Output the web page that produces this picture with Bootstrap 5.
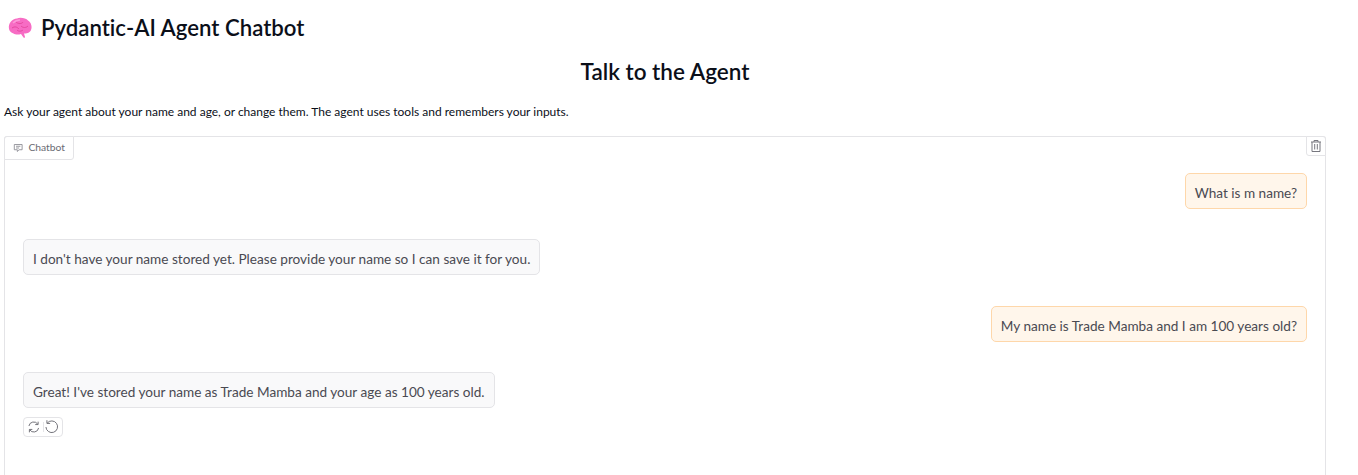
<!DOCTYPE html>
<html lang="en">
<head>
  <meta charset="UTF-8" />
  <meta name="viewport" content="width=device-width, initial-scale=1.0"/>
  <title>Pydantic-AI Agent Chatbot</title>
  <link href="https://cdn.jsdelivr.net/npm/bootstrap@5.3.0/dist/css/bootstrap.min.css" rel="stylesheet">
  <style>
    html, body {
      height: 475px;
      overflow: hidden;
    }
    body {
      background-color: #fff;
      font-family: "Lato", "Noto Sans", sans-serif;
      font-variant-ligatures: none;
      color: #0b0f19;
    }
    .page-wrap {
      width: 1326px;
      padding: 13px 0 0 4px;
    }
    .app-title {
      font-size: 22.2px;
      line-height: 30px;
      font-weight: 600;
      margin: 0 0 0 4px;
      gap: 8px;
    }
    .agent-heading {
      font-size: 22.5px;
      line-height: 30px;
      font-weight: 600;
      margin: 14px 0 0 0;
      text-align: center;
    }
    .agent-note {
      font-size: 12px;
      line-height: 18px;
      margin: 16px 0 15px 0;
    }
    .chat-panel {
      border: 1px solid #e4e4e7;
      border-bottom: 0;
      border-radius: 3px 3px 0 0;
      height: 340px;
      padding: 36px 18px 0 18px;
    }
    .chat-tag {
      top: -1px;
      left: -1px;
      width: 70px;
      height: 24px;
      padding: 0 8px;
      gap: 5px;
      font-size: 10.3px;
      color: #6b6b73;
      border: 1px solid #e4e4e7;
      border-radius: 3px 0 3px 0;
      background: #fff;
    }
    .trash-btn {
      top: -1px;
      right: -1px;
      width: 20px;
      height: 20px;
      border: 1px solid #e4e4e7;
      border-radius: 0 3px 0 3px;
      background: #fff;
    }
    .msg-row {
      margin-bottom: 30.3px;
    }
    .msg-bubble {
      font-size: 13.6px;
      line-height: 18px;
      padding: 10px 9px 6px 9px;
      height: 36px;
      color: #4a4a52;
      border-radius: 5px;
      white-space: nowrap;
    }
    .msg-user {
      background: #fff6eb;
      border: 1px solid #fed7aa;
    }
    .msg-bot {
      background: #f9f9fa;
      border: 1px solid #e4e4e7;
    }
    .msg-actions {
      width: 40px;
      height: 20px;
      margin-top: -21.4px;
      border: 1px solid #e4e4e7;
      border-radius: 4px;
      gap: 1px;
      padding: 0 2px;
    }
    .action-sep {
      width: 1px;
      height: 10px;
      background: #e4e4e7;
    }
  </style>
</head>
<body>
<div class="page-wrap">
  <h1 class="app-title d-flex align-items-center">
    <svg width="25" height="22" viewBox="0 0 25 22" aria-hidden="true">
      <path d="M1 12 C0 6 4 2 9 1.500 C12 0 18 1 20 3.500 C23 5 24.500 10 23 13 C22 16 18 16.500 16 16.500 L17 20 C17 21 16 21 15.500 20.500 L13 17 C10 18 7 17.500 5.500 16.500 C3 16 1.500 14 1 12 Z" fill="#f76cc4"/>
      <path d="M4 11 C7 9 9 10 11 12 M8 5 C10 7 14 7 15 5 M13 9 C15 11 18 11 20 9 M9 13 C11 15 14 14 15 13" fill="none" stroke="#e5489f" stroke-width="1"/>
      <path d="M5 6 C7 4 10 3 12 3" fill="none" stroke="#fb9ad8" stroke-width="1.500"/>
    </svg>
    <span>Pydantic-AI Agent Chatbot</span>
  </h1>
  <h2 class="agent-heading">Talk to the Agent</h2>
  <p class="agent-note">Ask your agent about your name and age, or change them. The agent uses tools and remembers your inputs.</p>

  <div class="chat-panel position-relative">
    <div class="chat-tag position-absolute d-flex align-items-center">
      <svg width="12" height="12" viewBox="0 0 12 12" aria-hidden="true">
        <path d="M1.500 2 H10.500 V8 H7 L5 10 V8 H1.500 Z M3.500 4 H8.500 M3.500 6 H7" fill="none" stroke="#8a8a92" stroke-width="1"/>
      </svg>
      <span>Chatbot</span>
    </div>
    <div class="trash-btn position-absolute d-flex align-items-center justify-content-center">
      <svg width="12" height="14" viewBox="0 0 12 14" aria-hidden="true">
        <path d="M1 3 H11 M4 3 V1.500 H8 V3 M2 3 V12.500 H10 V3 M4.700 5 V10.500 M7.300 5 V10.500" fill="none" stroke="#77777f" stroke-width="1"/>
      </svg>
    </div>

    <div class="msg-row d-flex justify-content-end">
      <div class="msg-bubble msg-user">What is m name?</div>
    </div>
    <div class="msg-row d-flex justify-content-start">
      <div class="msg-bubble msg-bot">I don't have your name stored yet. Please provide your name so I can save it for you.</div>
    </div>
    <div class="msg-row d-flex justify-content-end">
      <div class="msg-bubble msg-user">My name is Trade Mamba and I am 100 years old?</div>
    </div>
    <div class="msg-row d-flex justify-content-start">
      <div class="msg-bubble msg-bot">Great! I've stored your name as Trade Mamba and your age as 100 years old.</div>
    </div>
    <div class="msg-actions d-flex align-items-center">
      <svg width="16" height="16" viewBox="0 0 16 16" aria-hidden="true">
        <path d="M3 7 A5 5 0 0 1 12.200 5.200 M13 9 A5 5 0 0 1 3.800 10.800 M12.500 2.500 V5.500 H9.500 M3.500 13.500 V10.500 H6.500" fill="none" stroke="#6f6f77" stroke-width="1"/>
      </svg>
      <span class="action-sep"></span>
      <svg width="16" height="16" viewBox="0 0 16 16" aria-hidden="true">
        <path d="M3.300 4 A6 6 0 1 1 2 8 M3 1 V4.300 H6.300" fill="none" stroke="#6f6f77" stroke-width="1"/>
      </svg>
    </div>
  </div>
</div>
<script src="https://cdn.jsdelivr.net/npm/bootstrap@5.3.0/dist/js/bootstrap.bundle.min.js"></script>
</body>
</html>
